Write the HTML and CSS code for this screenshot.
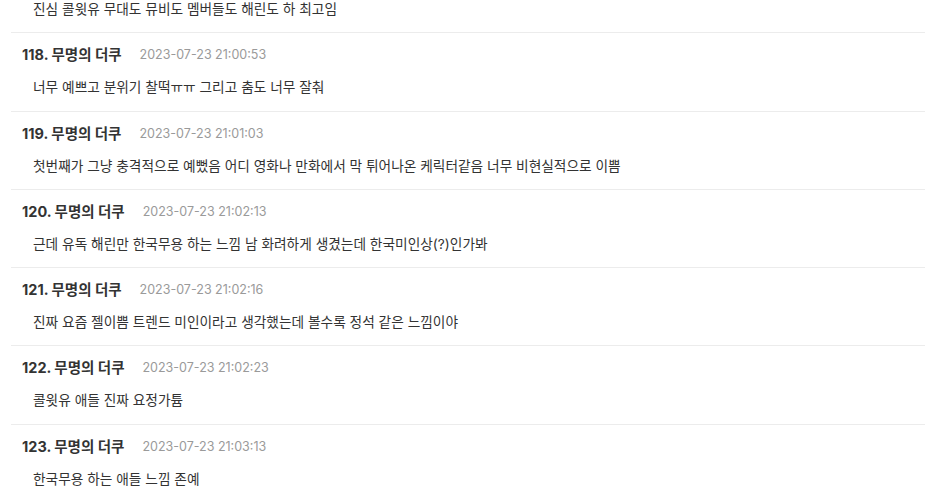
FILE: index.html
```html
<!DOCTYPE html>
<html lang="ko">
<head>
    <meta charset="UTF-8">
    <meta name="viewport" content="width=device-width, initial-scale=1.0">
    <title>댓글</title>
    <link rel="stylesheet" href="styles.css">
</head>
<body>
    <div class="comments">
        <div class="comment cut">
            <p class="text">진심 콜윗유 무대도 뮤비도 멤버들도 해린도 하 최고임</p>
        </div>
        <div class="comment">
            <div class="meta"><span class="name">118. 무명의 더쿠</span><span class="date">2023-07-23 21:00:53</span></div>
            <p class="text">너무 예쁘고 분위기 찰떡ㅠㅠ 그리고 춤도 너무 잘춰</p>
        </div>
        <div class="comment">
            <div class="meta"><span class="name">119. 무명의 더쿠</span><span class="date">2023-07-23 21:01:03</span></div>
            <p class="text">첫번째가 그냥 충격적으로 예뻤음 어디 영화나 만화에서 막 튀어나온 케릭터같음 너무 비현실적으로 이쁨</p>
        </div>
        <div class="comment">
            <div class="meta"><span class="name">120. 무명의 더쿠</span><span class="date">2023-07-23 21:02:13</span></div>
            <p class="text">근데 유독 해린만 한국무용 하는 느낌 남 화려하게 생겼는데 한국미인상(?)인가봐</p>
        </div>
        <div class="comment">
            <div class="meta"><span class="name">121. 무명의 더쿠</span><span class="date">2023-07-23 21:02:16</span></div>
            <p class="text">진짜 요즘 젤이쁨 트렌드 미인이라고 생각했는데 볼수록 정석 같은 느낌이야</p>
        </div>
        <div class="comment">
            <div class="meta"><span class="name">122. 무명의 더쿠</span><span class="date">2023-07-23 21:02:23</span></div>
            <p class="text">콜윗유 애들 진짜 요정가튬</p>
        </div>
        <div class="comment">
            <div class="meta"><span class="name">123. 무명의 더쿠</span><span class="date">2023-07-23 21:03:13</span></div>
            <p class="text">한국무용 하는 애들 느낌 존예</p>
        </div>
    </div>
</body>
</html>
```

FILE: styles.css
```css
body {
    margin: 0;
    background: #fff;
    font-family: Inter, "Noto Sans CJK KR", sans-serif;
    overflow: hidden;
}
.comments {
    padding-left: 11px;
}
.comment {
    border-top: 1px solid #ececec;
    padding: 12px 0 13.25px 11px;
}
.comment.cut {
    border-top: none;
    padding-top: 0;
    margin-top: -1px;
}
.meta {
    height: 20px;
    line-height: 20px;
    display: flex;
    align-items: center;
}
.name {
    font-size: 14.5px;
    font-weight: bold;
    color: #333;
}
.date {
    margin-left: 18px;
    font-size: 12.5px;
    color: #9a9a9a;
}
.text {
    margin: 12px 0 0 11px;
    font-size: 13.7px;
    line-height: 20px;
    color: #333;
}
.cut .text {
    margin-top: 0;
}
```
